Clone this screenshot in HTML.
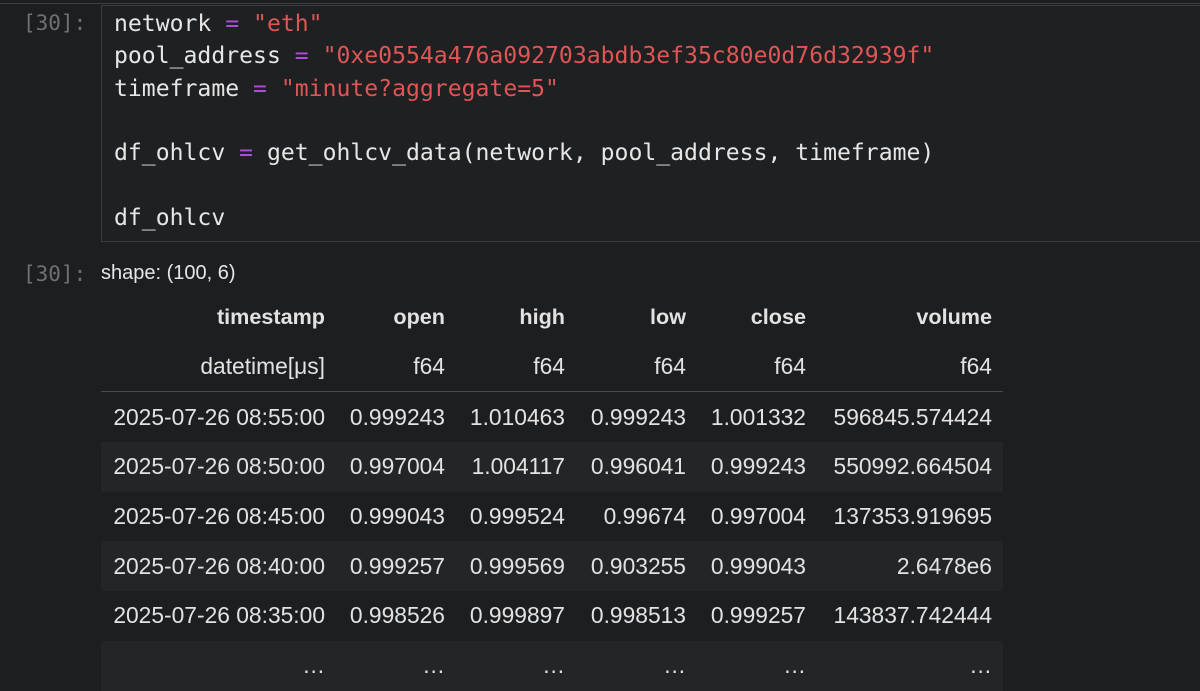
<!DOCTYPE html>
<html><head><meta charset="utf-8"><style>
body{margin:0;width:1200px;height:683px;background:#1d1e20;overflow:hidden;position:relative;font-family:"Liberation Sans",sans-serif;color:#dcdcdc}
.top{position:absolute;left:0;right:0;top:3px;height:1px;background:#3c3d40}
.prompt{position:absolute;left:23px;font-family:"DejaVu Sans Mono",monospace;font-size:21px;color:#6f7072}
.code{position:absolute;left:101px;top:5px;width:1100px;height:237px;border:1px solid #3a3b3e;border-right:none;background:#1f2022;box-sizing:border-box}
.code pre{margin:0;position:absolute;left:12px;top:2px;font-family:"DejaVu Sans Mono",monospace;font-size:23.1px;line-height:32.3px;color:#e6e6e6}
.o{color:#b04be0}.s{color:#e05555}
.shape{position:absolute;left:101px;top:262px;font-size:20px;color:#e6e6e6}
table{position:absolute;left:101px;top:292px;width:902px;border-collapse:collapse;font-size:22.8px;color:#e2e2e2;table-layout:fixed}
td,th{text-align:right;padding:0 11px 0 0;height:49.7px;white-space:nowrap}
th{font-weight:bold;font-size:21.6px}
tr.h2 td{border-bottom:1px solid #4a4b4e}
tbody tr:nth-child(even){background:#232527}
</style></head><body>
<div class="top"></div>
<div class="prompt" style="top:11px">[30]:</div>
<div class="code"><pre>network <span class="o">=</span> <span class="s">"eth"</span>
pool_address <span class="o">=</span> <span class="s">"0xe0554a476a092703abdb3ef35c80e0d76d32939f"</span>
timeframe <span class="o">=</span> <span class="s">"minute?aggregate=5"</span>

df_ohlcv <span class="o">=</span> get_ohlcv_data(network, pool_address, timeframe)

df_ohlcv</pre></div>
<div class="prompt" style="top:262px">[30]:</div>
<div class="shape">shape: (100, 6)</div>
<table>
<colgroup><col style="width:235px"><col style="width:120px"><col style="width:120px"><col style="width:121px"><col style="width:120px"><col style="width:186px"></colgroup>
<thead>
<tr><th>timestamp</th><th>open</th><th>high</th><th>low</th><th>close</th><th>volume</th></tr>
<tr class="h2"><td>datetime[μs]</td><td>f64</td><td>f64</td><td>f64</td><td>f64</td><td>f64</td></tr>
</thead>
<tbody>
<tr><td>2025-07-26 08:55:00</td><td>0.999243</td><td>1.010463</td><td>0.999243</td><td>1.001332</td><td>596845.574424</td></tr>
<tr><td>2025-07-26 08:50:00</td><td>0.997004</td><td>1.004117</td><td>0.996041</td><td>0.999243</td><td>550992.664504</td></tr>
<tr><td>2025-07-26 08:45:00</td><td>0.999043</td><td>0.999524</td><td>0.99674</td><td>0.997004</td><td>137353.919695</td></tr>
<tr><td>2025-07-26 08:40:00</td><td>0.999257</td><td>0.999569</td><td>0.903255</td><td>0.999043</td><td>2.6478e6</td></tr>
<tr><td>2025-07-26 08:35:00</td><td>0.998526</td><td>0.999897</td><td>0.998513</td><td>0.999257</td><td>143837.742444</td></tr>
<tr><td>…</td><td>…</td><td>…</td><td>…</td><td>…</td><td>…</td></tr>
</tbody>
</table>
</body></html>
